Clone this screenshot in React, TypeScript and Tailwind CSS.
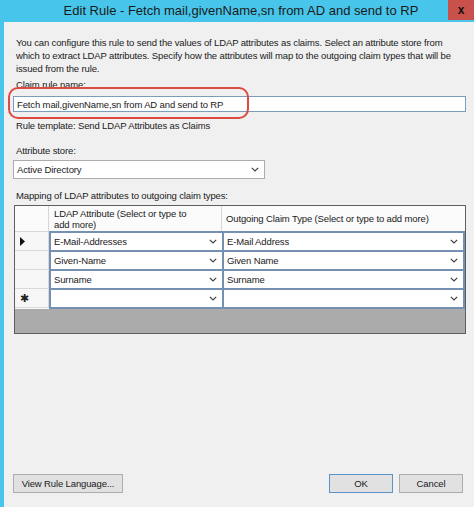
import React from 'react';

const uiFont = { fontFamily: '"Liberation Sans", Arial, sans-serif' };

function Chevron() {
  return (
    <svg width="8" height="5" viewBox="0 0 8 5" className="shrink-0">
      <polyline points="0.8,0.8 4,4 7.2,0.8" fill="none" stroke="#404040" strokeWidth="1.2" />
    </svg>
  );
}

function ComboCell({ value, width }: { value: string; width: string }) {
  return (
    <div className={`${width} flex h-full items-center justify-between border-r-2 border-b-2 border-[#7591b1] bg-white pl-[3px] pr-[5px]`}>
      <span className="truncate">{value}</span>
      <Chevron />
    </div>
  );
}

const rows = [
  { marker: 'arrow', ldap: 'E-Mail-Addresses', claim: 'E-Mail Address' },
  { marker: '', ldap: 'Given-Name', claim: 'Given Name' },
  { marker: '', ldap: 'Surname', claim: 'Surname' },
  { marker: 'new', ldap: '', claim: '' }
];

function MappingGrid() {
  return (
    <div className="ml-[1px] flex h-[129px] w-[452px] flex-col border border-[#5e5e5e] bg-[#ababab]">
      <div className="flex h-[26px] border-b border-[#d6d6d6] bg-[#fbfbfb]">
        <div className="w-[34px] border-r border-[#d6d6d6]" />
        <div className="w-[173px] border-r border-[#d6d6d6] pl-[5px] pt-[2px] leading-[11px]">
          LDAP Attribute (Select or type to
          <br />
          add more)
        </div>
        <div className="flex flex-1 items-center pl-[4px]">Outgoing Claim Type (Select or type to add more)</div>
      </div>
      <div className="flex">
        <div className="flex w-[34px] flex-col bg-[#f7f7f7]">
          {rows.map((row, i) => (
            <div key={i} className="flex h-[19px] items-center border-b border-r border-[#d9d9d9] pl-[5px]">
              {row.marker === 'arrow' && (
                <svg width="5" height="9" viewBox="0 0 5 9">
                  <polygon points="0,0 5,4.5 0,9" fill="#111" />
                </svg>
              )}
              {row.marker === 'new' && <span className="text-[11px] leading-none text-[#222]">✱</span>}
            </div>
          ))}
        </div>
        <div className="-mt-[1px] flex flex-1 flex-col border-l-2 border-t-2 border-[#7591b1]">
          {rows.map((row, i) => (
            <div key={i} className="flex h-[19px]">
              <ComboCell value={row.ldap} width="w-[173px]" />
              <ComboCell value={row.claim} width="flex-1" />
            </div>
          ))}
        </div>
      </div>
    </div>
  );
}

function Button({ label, primary, width }: { label: string; primary?: boolean; width: string }) {
  return (
    <button
      type="button"
      className={`${width} h-[19px] border ${primary ? 'border-[#5b93c6]' : 'border-[#adadad]'} bg-[#e1e1e1] text-[#1a1a1a]`}
    >
      {label}
    </button>
  );
}

export default function App() {
  return (
    <div className="relative flex h-[507px] w-[474px] flex-col overflow-hidden bg-[#47c5ea]" style={uiFont}>
      <div className="relative flex h-[22px] shrink-0 items-center justify-center">
        <span className="pl-[8px] text-[13px] text-[#1b1b1b]">
          Edit Rule - Fetch mail,givenName,sn from AD and send to RP
        </span>
        <div className="absolute right-0 top-0 flex h-[20px] w-[26px] items-center justify-center bg-[#c9514b]">
          <span className="text-[12px] font-bold leading-none text-[#111]">x</span>
        </div>
      </div>

      <div className="ml-[4px] flex flex-1 flex-col bg-[#f0f0f0] px-[9px] pt-[14px] text-[9.5px] leading-[13px] tracking-[-0.13px] text-[#1a1a1a]">
        <p className="whitespace-nowrap pl-[3px]">
          You can configure this rule to send the values of LDAP attributes as claims. Select an attribute store from
          <br />
          which to extract LDAP attributes. Specify how the attributes will map to the outgoing claim types that will be
          <br />
          issued from the rule.
        </p>

        <div className="mt-[3px] pl-[3px]">Claim rule name:</div>
        <div className="mt-[5px] flex h-[16px] w-[453px] items-center border border-[#7a9cc0] bg-white pl-[3px]">
          Fetch mail,givenName,sn from AD and send to RP
        </div>

        <div className="mt-[7px] pl-[3px]">Rule template: Send LDAP Attributes as Claims</div>

        <div className="mt-[12px] pl-[3px]">Attribute store:</div>
        <div className="mt-[3px] flex h-[19px] w-[252px] items-center justify-between border border-[#acacac] bg-white pl-[3px] pr-[5px]">
          <span>Active Directory</span>
          <Chevron />
        </div>

        <div className="mt-[10px] pl-[3px]">Mapping of LDAP attributes to outgoing claim types:</div>
        <div className="mt-[3px]">
          <MappingGrid />
        </div>

        <div className="mb-[14px] mt-auto flex items-center">
          <Button label="View Rule Language..." width="w-[110px]" />
          <div className="ml-auto flex gap-[6px] pr-[2px]">
            <Button label="OK" primary width="w-[64px]" />
            <Button label="Cancel" width="w-[64px]" />
          </div>
        </div>
      </div>

      {/* red highlight drawn over the rule name field */}
      <div className="pointer-events-none absolute left-[8px] top-[87px] h-[32px] w-[241px] rounded-[10px] border-2 border-[#dd4a3f]" />
    </div>
  );
}
